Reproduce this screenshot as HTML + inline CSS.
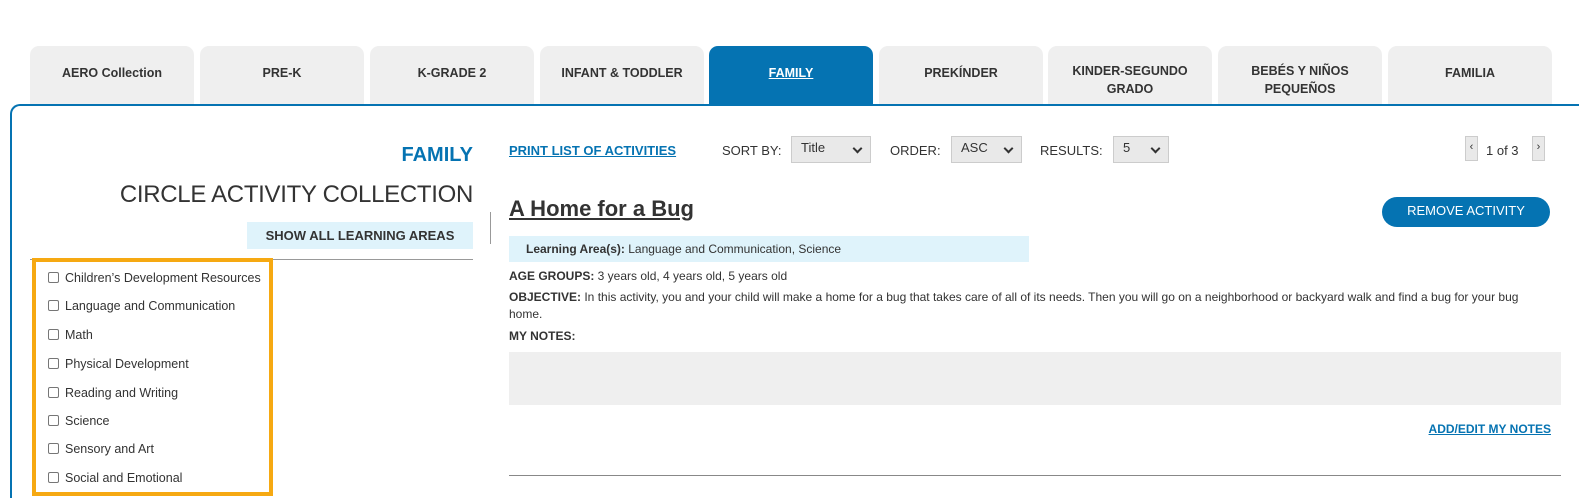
<!DOCTYPE html>
<html style="height:498px;overflow:hidden"><head><meta charset="utf-8"><style>
*{margin:0;padding:0;box-sizing:border-box}
body{width:1579px;height:498px;overflow:hidden;background:#fff;font-family:"Liberation Sans",Arial,sans-serif;color:#333;position:relative}
.a{position:absolute}
.tab{position:absolute;top:46px;height:58px;width:164px;background:#efefef;border-radius:9px 9px 0 0;font-weight:bold;font-size:12.5px;color:#333;text-align:center;padding-top:18px;line-height:18px}
.tab.on{background:#0573b2;color:#fff;text-decoration:underline}
.panel{position:absolute;left:10px;top:104px;width:1569px;height:394px;border-top:2px solid #0573b2;border-left:2px solid #0573b2;border-radius:10px 0 0 0}
.cb{position:absolute;left:48px;width:11px;height:11px;border:1px solid #767676;border-radius:2px;background:#fff}
.cl{position:absolute;left:65px;font-size:12.5px;color:#333;line-height:14px}
.sel{position:absolute;top:136px;height:27px;background:#e9e9e9;border:1px solid #ccc;font-size:13px;padding:3px 0 0 9px;color:#333}
.sel:after{content:"";position:absolute;right:9px;top:8px;width:5px;height:5px;border-right:2px solid #333;border-bottom:2px solid #333;transform:rotate(45deg)}
.lbl{position:absolute;top:143px;font-size:13px;color:#333}
.t{position:absolute;left:509px;font-size:12px;line-height:17px;color:#333}
</style></head><body>
<div class="tab" style="left:30px">AERO Collection</div>
<div class="tab" style="left:200px">PRE-K</div>
<div class="tab" style="left:370px">K-GRADE 2</div>
<div class="tab" style="left:540px">INFANT &amp; TODDLER</div>
<div class="tab on" style="left:709px">FAMILY</div>
<div class="tab" style="left:879px">PREKÍNDER</div>
<div class="tab" style="left:1048px;padding-top:16px">KINDER-SEGUNDO<br>GRADO</div>
<div class="tab" style="left:1218px;padding-top:16px">BEBÉS Y NIÑOS<br>PEQUEÑOS</div>
<div class="tab" style="left:1388px">FAMILIA</div>
<div class="panel"></div>

<div class="a" style="right:1106px;top:144px;font-size:20px;font-weight:bold;color:#0573b2">FAMILY</div>
<div class="a" style="right:1106px;top:181px;font-size:24px;color:#333;letter-spacing:-0.3px">CIRCLE ACTIVITY COLLECTION</div>
<div class="a" style="left:247px;top:222px;width:226px;height:27px;background:#dff3fb;font-size:13px;font-weight:bold;text-align:center;line-height:27px;color:#333">SHOW ALL LEARNING AREAS</div>
<div class="a" style="left:30px;top:259px;width:443px;height:1px;background:#999"></div>
<div class="a" style="left:490px;top:212px;width:1px;height:32px;background:#999"></div>
<div class="a" style="left:32px;top:258px;width:241px;height:238px;border:4px solid #f6a912"></div>

<div class="cb" style="top:272px"></div><div class="cl" style="top:271px">Children’s Development Resources</div>
<div class="cb" style="top:300px"></div><div class="cl" style="top:299px">Language and Communication</div>
<div class="cb" style="top:329px"></div><div class="cl" style="top:328px">Math</div>
<div class="cb" style="top:358px"></div><div class="cl" style="top:357px">Physical Development</div>
<div class="cb" style="top:387px"></div><div class="cl" style="top:386px">Reading and Writing</div>
<div class="cb" style="top:415px"></div><div class="cl" style="top:414px">Science</div>
<div class="cb" style="top:443px"></div><div class="cl" style="top:442px">Sensory and Art</div>
<div class="cb" style="top:472px"></div><div class="cl" style="top:471px">Social and Emotional</div>

<div class="a" style="left:509px;top:143px;font-size:13px;font-weight:bold;color:#0573b2;text-decoration:underline">PRINT LIST OF ACTIVITIES</div>
<div class="lbl" style="left:722px">SORT BY:</div>
<div class="sel" style="left:791px;width:80px">Title</div>
<div class="lbl" style="left:890px">ORDER:</div>
<div class="sel" style="left:951px;width:71px">ASC</div>
<div class="lbl" style="left:1040px">RESULTS:</div>
<div class="sel" style="left:1113px;width:56px">5</div>
<div class="a" style="left:1465px;top:136px;width:13px;height:25px;background:#e9e9e9;border:1px solid #ccc;font-size:11px;text-align:center;line-height:20px">‹</div>
<div class="a" style="left:1486px;top:143px;font-size:13px">1 of 3</div>
<div class="a" style="left:1532px;top:136px;width:13px;height:25px;background:#e9e9e9;border:1px solid #ccc;font-size:11px;text-align:center;line-height:20px">›</div>

<div class="a" style="left:509px;top:196px;font-size:22px;font-weight:bold;text-decoration:underline;color:#333">A Home for a Bug</div>
<div class="a" style="left:1382px;top:197px;width:168px;height:30px;background:#0573b2;border-radius:15px;color:#fff;font-size:13px;text-align:center;line-height:28px">REMOVE ACTIVITY</div>
<div class="a" style="left:509px;top:236px;width:520px;height:26px;background:#dff3fb;font-size:12px;line-height:26px;padding-left:17px"><b>Learning Area(s):</b> Language and Communication, Science</div>
<div class="t" style="top:268px"><b>AGE GROUPS:</b> 3 years old, 4 years old, 5 years old</div>
<div class="t" style="top:289px;width:1045px"><b>OBJECTIVE:</b> In this activity, you and your child will make a home for a bug that takes care of all of its needs. Then you will go on a neighborhood or backyard walk and find a bug for your bug home.</div>
<div class="t" style="top:328px"><b>MY NOTES:</b></div>
<div class="a" style="left:509px;top:352px;width:1052px;height:53px;background:#efefef"></div>
<div class="a" style="right:28px;top:422px;font-size:12px;font-weight:bold;color:#0573b2;text-decoration:underline">ADD/EDIT MY NOTES</div>
<div class="a" style="left:509px;top:475px;width:1052px;height:1px;background:#888"></div>
</body></html>
